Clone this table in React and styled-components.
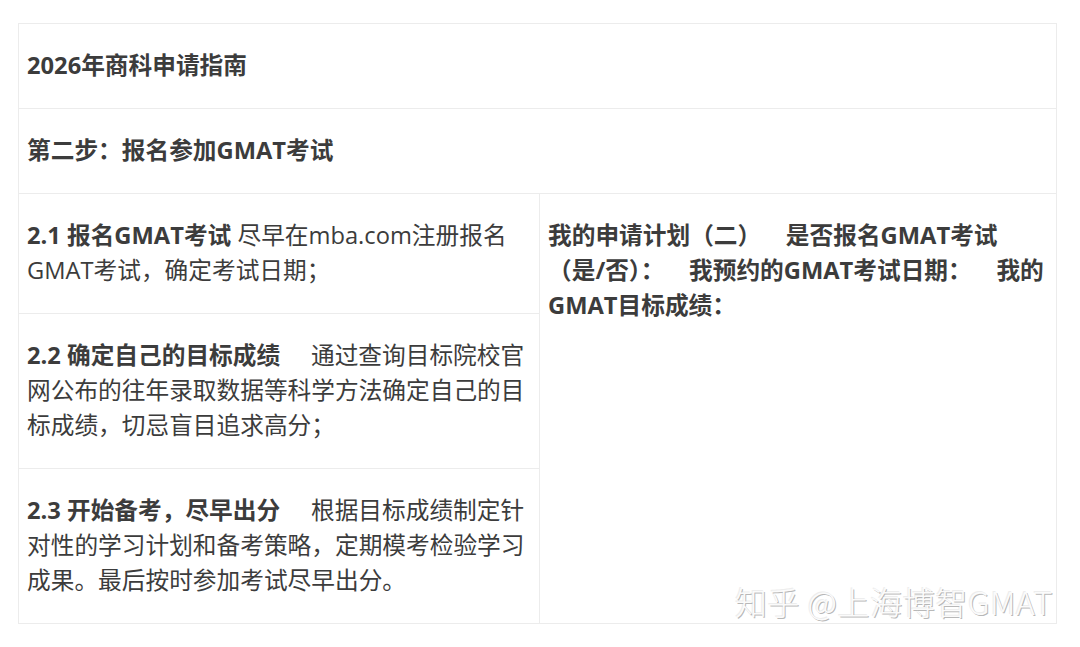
import React from 'react';
import styled, { createGlobalStyle } from 'styled-components';

const GlobalStyle = createGlobalStyle`
  html, body {
    margin: 0;
    padding: 0;
    background: #fff;
  }
  body {
    font-family: "Open Sans", "Noto Sans CJK SC", sans-serif;
    color: #3c3c3c;
  }
`;

const Page = styled.div`
  position: relative;
  width: 1080px;
  height: 647px;
  padding: 23px 0 0 18px;
  box-sizing: border-box;
`;

const Table = styled.div`
  width: 1039px;
  display: grid;
  grid-template-columns: 520px 1fr;
  border: 1px solid #ececec;
  box-sizing: border-box;
`;

const Cell = styled.div`
  grid-column: ${p => p.$col || '1 / span 2'};
  grid-row: ${p => p.$rows || 'auto'};
  padding: 24px 8px 25px;
  font-size: 23.7px;
  line-height: 35px;
  border-bottom: ${p => (p.$last ? 'none' : '1px solid #ececec')};
  border-left: ${p => (p.$right ? '1px solid #ececec' : 'none')};
  box-sizing: border-box;
  font-weight: ${p => (p.$bold ? 700 : 400)};
`;

const Strong = styled.strong`
  font-weight: 700;
`;

const Watermark = styled.div`
  position: absolute;
  right: 27px;
  bottom: 29px;
  font-family: "Noto Sans CJK SC", "Open Sans", sans-serif;
  font-size: 32px;
  line-height: 34px;
  font-weight: 300;
  color: #fbfbfb;
  text-shadow: 1px 1px 0 #b8b8b8, -1px -1px 0 #ededed;
  letter-spacing: 0.6px;
`;

const gap = '\u00a0\u00a0\u00a0\u00a0';
const wideGap = '\u00a0\u00a0\u00a0\u00a0\u00a0';

export default function App() {
  return (
    <>
      <GlobalStyle />
      <Page>
        <Table>
          <Cell $bold>2026年商科申请指南</Cell>
          <Cell $bold>第二步：报名参加GMAT考试</Cell>
          <Cell $col="1" $rows="3">
            <Strong>2.1 报名GMAT考试</Strong> 尽早在mba.com注册报名GMAT考试，确定考试日期；
          </Cell>
          <Cell $col="2" $rows="3 / span 3" $right $bold $last>
            我的申请计划（二）{gap}是否报名GMAT考试<br />（是/否）：{gap}我预约的GMAT考试日期：{gap}我的GMAT目标成绩：
          </Cell>
          <Cell $col="1" $rows="4">
            <Strong>2.2 确定自己的目标成绩</Strong>{wideGap}通过查询目标院校官网公布的往年录取数据等科学方法确定自己的目标成绩，切忌盲目追求高分；
          </Cell>
          <Cell $col="1" $rows="5" $last>
            <Strong>2.3 开始备考，尽早出分</Strong>{wideGap}根据目标成绩制定针对性的学习计划和备考策略，定期模考检验学习成果。最后按时参加考试尽早出分。
          </Cell>
        </Table>
        <Watermark>知乎 @上海博智GMAT</Watermark>
      </Page>
    </>
  );
}
